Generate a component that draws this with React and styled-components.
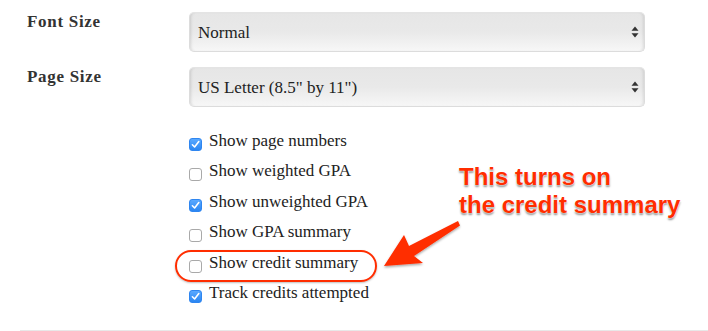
import React, { useState } from "react";
import styled, { createGlobalStyle } from "styled-components";

const GlobalStyle = createGlobalStyle`
  body {
    margin: 0;
    background: #fff;
    font-family: "Liberation Serif", "DejaVu Serif", serif;
    color: #333;
  }
`;

const options = [
  { label: "Show page numbers", checked: true },
  { label: "Show weighted GPA", checked: false },
  { label: "Show unweighted GPA", checked: true },
  { label: "Show GPA summary", checked: false },
  { label: "Show credit summary", checked: false },
  { label: "Track credits attempted", checked: true },
];

export default function App() {
  const [fontSize, setFontSize] = useState("Normal");
  const [pageSize, setPageSize] = useState("US Letter (8.5\" by 11\")");
  const [checks, setChecks] = useState(options.map((o) => o.checked));

  const toggle = (i) => {
    const next = [...checks];
    next[i] = !next[i];
    setChecks(next);
  };

  return (
    <StPage>
      <GlobalStyle />
      <StForm>
        <StLabel>Font Size</StLabel>
        <SelectBox value={fontSize} onChange={setFontSize} items={["Small", "Normal", "Large"]} />

        <StLabel>Page Size</StLabel>
        <SelectBox
          value={pageSize}
          onChange={setPageSize}
          items={["US Letter (8.5\" by 11\")", "A4 (210mm by 297mm)"]}
        />

        <span />
        <StList>
          {options.map((o, i) => (
            <StRow key={o.label} onClick={() => toggle(i)}>
              <StCheck $checked={checks[i]}>
                {checks[i] && (
                  <svg width="9" height="9" viewBox="0 0 9 9">
                    <path
                      d="M1.4 4.8 L3.6 7 L7.8 1.6"
                      fill="none"
                      stroke="#fff"
                      strokeWidth="1.6"
                      strokeLinecap="round"
                      strokeLinejoin="round"
                    />
                  </svg>
                )}
              </StCheck>
              {o.label}
            </StRow>
          ))}
        </StList>
      </StForm>
      <StRule />

      <StOval />
      <StArrow width="708" height="331" viewBox="0 0 708 331">
        <defs>
          <filter id="sh" x="-20%" y="-20%" width="140%" height="140%">
            <feDropShadow dx="0" dy="1.5" stdDeviation="1.2" floodColor="#000" floodOpacity="0.35" />
          </filter>
        </defs>
        <polygon
          filter="url(#sh)"
          fill="#ff2d00"
          points="458,221 460,225.5 414,256 423,263 384,266 404,235 409,246"
        />
      </StArrow>
      <StNote>
        This turns on
        <br />
        the credit summary
      </StNote>
    </StPage>
  );
}

function SelectBox({ value, onChange, items }) {
  return (
    <StSelectWrap>
      <StSelect value={value} onChange={(e) => onChange(e.target.value)}>
        {items.map((it) => (
          <option key={it}>{it}</option>
        ))}
      </StSelect>
      <StCaret width="8" height="12" viewBox="0 0 8 12">
        <path d="M4 0.5 L7.5 4.8 L0.5 4.8 Z" fill="#333" />
        <path d="M4 11.5 L7.5 7.2 L0.5 7.2 Z" fill="#333" />
      </StCaret>
    </StSelectWrap>
  );
}

const StPage = styled.div`
  position: relative;
  width: 708px;
  height: 331px;
  overflow: hidden;
`;

const StForm = styled.div`
  display: grid;
  grid-template-columns: 162px 456px;
  row-gap: 15px;
  padding: 12px 0 0 27px;
`;

const StLabel = styled.div`
  font-weight: bold;
  font-size: 17px;
  line-height: 20px;
  letter-spacing: 0.7px;
  color: #333;
`;

const StSelectWrap = styled.div`
  position: relative;
  height: 40px;
`;

const StSelect = styled.select`
  appearance: none;
  width: 100%;
  height: 40px;
  margin: 0;
  padding: 0 30px 0 8px;
  font-family: "Liberation Serif", "DejaVu Serif", serif;
  font-size: 17px;
  color: #222;
  border: 1px solid #dcdcdc;
  border-top-color: #e4e4e4;
  border-radius: 5px;
  background: linear-gradient(#e6e6e6, #e9e9e9 50%, #f7f7f7);
  box-shadow: inset 3px 0 3px -2px rgba(0, 0, 0, 0.12),
    inset -3px 0 3px -2px rgba(0, 0, 0, 0.1);
  outline: none;
`;

const StCaret = styled.svg`
  position: absolute;
  right: 6px;
  top: 14px;
  pointer-events: none;
`;

const StList = styled.div`
  display: flex;
  flex-direction: column;
  margin-top: 4px;
`;

const StRow = styled.label`
  display: flex;
  align-items: flex-start;
  gap: 7px;
  height: 30.4px;
  font-size: 17px;
  line-height: 30.4px;
  color: #222;
  cursor: pointer;
`;

const StCheck = styled.span`
  flex: none;
  box-sizing: border-box;
  width: 13px;
  height: 13px;
  margin-top: 12px;
  border-radius: 3px;
  display: flex;
  align-items: center;
  justify-content: center;
  border: 1px solid ${(p) => (p.$checked ? "#2f86f0" : "#a9a9a9")};
  background: ${(p) => (p.$checked ? "linear-gradient(#5aa9ff, #2a86f2)" : "#fff")};
`;

const StRule = styled.div`
  position: absolute;
  left: 20px;
  right: 0;
  top: 330px;
  height: 1px;
  background: #e8e8e8;
`;

const StOval = styled.div`
  position: absolute;
  left: 175px;
  top: 250px;
  width: 202px;
  height: 32px;
  box-sizing: border-box;
  border: 2.5px solid #ff2d00;
  border-radius: 17px;
  box-shadow: 0 1px 2px rgba(0, 0, 0, 0.25);
`;

const StArrow = styled.svg`
  position: absolute;
  left: 0;
  top: 0;
  pointer-events: none;
`;

const StNote = styled.div`
  position: absolute;
  left: 459px;
  top: 163px;
  font-family: "Liberation Sans", Arial, sans-serif;
  font-weight: bold;
  font-size: 24px;
  line-height: 28px;
  color: #ff2d00;
  white-space: nowrap;
  text-shadow: 0 0 1px #fff, 0 0 2px #fff, 0 1.5px 2px rgba(0, 0, 0, 0.45);
`;
